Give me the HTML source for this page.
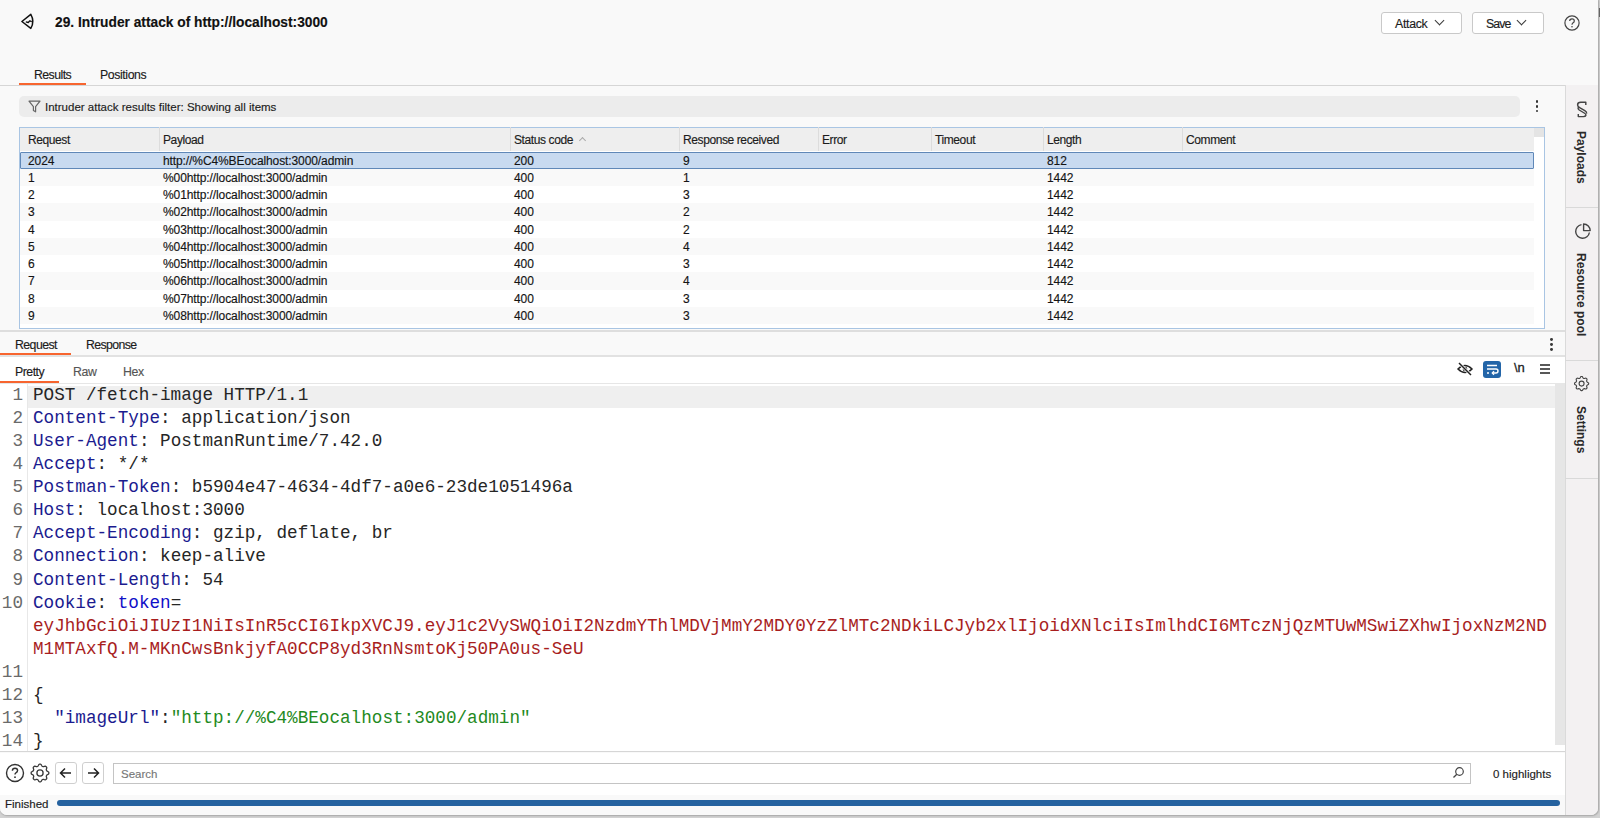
<!DOCTYPE html>
<html><head><meta charset="utf-8">
<style>
*{margin:0;padding:0;box-sizing:border-box}
html,body{width:1600px;height:818px;overflow:hidden;background:#d2d2d2;font-family:"Liberation Sans",sans-serif;color:#1c1c1c}
.a{position:absolute}
.t{position:absolute;white-space:pre;font-size:12px;line-height:14px;-webkit-text-stroke:0.15px currentColor}
#win{position:absolute;left:0;top:0;width:1598px;height:815px;background:#f9f9f9;overflow:hidden;border-radius:0 0 7px 7px;box-shadow:0.5px 0.5px 1.5px #a8a8a8}
.btn{position:absolute;background:#fff;border:1px solid #c9c9c9;border-radius:3px}
.chev{position:absolute;width:7px;height:7px;border-right:1.1px solid #3a3a3a;border-bottom:1.1px solid #3a3a3a;transform:rotate(45deg)}
.row{position:absolute;left:20px;width:1514px;height:17.3px}
.cell{position:absolute;top:1px;font-size:12px;line-height:15px;white-space:pre;color:#141414;letter-spacing:-0.1px;-webkit-text-stroke:0.15px currentColor}
.hd{position:absolute;top:5px;font-size:12px;line-height:15px;color:#1c1c1c;white-space:pre;letter-spacing:-0.4px;-webkit-text-stroke:0.15px currentColor}
.cd{position:absolute;left:33px;font-family:"Liberation Mono",monospace;font-size:17.65px;line-height:23.13px;white-space:pre;color:#262626}
.ln{position:absolute;left:0;width:23px;text-align:right;font-family:"Liberation Mono",monospace;font-size:17.65px;line-height:23.13px;color:#6a6a6a}
.k{color:#1b1b8f}
.v{color:#222}
.r{color:#a81e1e}
.g{color:#1f8a23}
.kb{color:#1010c8}
.side{position:absolute;font-size:12px;font-weight:bold;color:#2a2a2a;transform:rotate(90deg);transform-origin:0 0;white-space:pre}
</style></head><body>
<div class="a" style="left:1599px;top:8px;width:1px;height:9px;background:#555"></div>
<div id="win">
<svg width="0" height="0" style="position:absolute"><defs><g id="gear"><path d="M12.0,3.2 12.6,3.2 13.1,3.5 13.5,4.3 13.9,5.0 14.3,5.3 14.7,5.5 15.1,5.7 15.6,5.7 16.4,5.4 17.2,5.2 17.8,5.4 18.2,5.8 18.6,6.2 18.8,6.8 18.6,7.6 18.3,8.4 18.3,8.9 18.5,9.3 18.7,9.7 19.0,10.1 19.7,10.5 20.5,10.9 20.8,11.4 20.8,12.0 20.8,12.6 20.5,13.1 19.7,13.5 19.0,13.9 18.7,14.3 18.5,14.7 18.3,15.1 18.3,15.6 18.6,16.4 18.8,17.2 18.6,17.8 18.2,18.2 17.8,18.6 17.2,18.8 16.4,18.6 15.6,18.3 15.1,18.3 14.7,18.5 14.3,18.7 13.9,19.0 13.5,19.7 13.1,20.5 12.6,20.8 12.0,20.8 11.4,20.8 10.9,20.5 10.5,19.7 10.1,19.0 9.7,18.7 9.3,18.5 8.9,18.3 8.4,18.3 7.6,18.6 6.8,18.8 6.2,18.6 5.8,18.2 5.4,17.8 5.2,17.2 5.4,16.4 5.7,15.6 5.7,15.1 5.5,14.7 5.3,14.3 5.0,13.9 4.3,13.5 3.5,13.1 3.2,12.6 3.2,12.0 3.2,11.4 3.5,10.9 4.3,10.5 5.0,10.1 5.3,9.7 5.5,9.3 5.7,8.9 5.7,8.4 5.4,7.6 5.2,6.8 5.4,6.2 5.8,5.8 6.2,5.4 6.8,5.2 7.6,5.4 8.4,5.7 8.9,5.7 9.3,5.5 9.7,5.3 10.1,5.0 10.5,4.3 10.9,3.5 11.4,3.2Z" fill="none" stroke-linejoin="round"/><circle cx="12" cy="12" r="3.1" fill="none"/></g></defs></svg>

<!-- header -->
<svg class="a" style="left:14px;top:8px" width="30" height="28" viewBox="0 0 30 28"><path d="M7.9,13.5 L16.8,6.3 Q20.9,13.4 16.8,20.4 Z" fill="none" stroke="#111" stroke-width="1.5" stroke-linejoin="round"/><path d="M11.8,13.9 L14.3,14.5 L15.8,12.8 L17.8,13.6" fill="none" stroke="#111" stroke-width="1.3" stroke-linejoin="round"/></svg>
<div class="t" style="left:55px;top:16.3px;font-size:13.75px;font-weight:bold;color:#111">29. Intruder attack of http://localhost:3000</div>

<div class="btn" style="left:1381px;top:12px;width:81px;height:22px"></div>
<div class="t" style="left:1395px;top:16.7px;font-size:12.3px;letter-spacing:-0.3px">Attack</div>
<div class="chev" style="left:1436px;top:17px"></div>
<div class="btn" style="left:1472px;top:12px;width:72px;height:22px"></div>
<div class="t" style="left:1486px;top:16.7px;font-size:12.3px;letter-spacing:-0.9px">Save</div>
<div class="chev" style="left:1518px;top:17px"></div>
<svg class="a" style="left:1562.5px;top:14px" width="18" height="18" viewBox="0 0 18 18"><circle cx="9" cy="9" r="7.1" fill="none" stroke="#444" stroke-width="1.2"/><path d="M6.7,7.1 Q6.7,4.9 9,4.9 Q11.3,4.9 11.3,6.9 Q11.3,8.2 9.9,8.9 Q9,9.4 9,10.7" fill="none" stroke="#444" stroke-width="1.2"/><circle cx="9" cy="12.7" r="0.8" fill="#444"/></svg>

<!-- tabs -->
<div class="t" style="left:34px;top:67.6px;font-size:12.3px;letter-spacing:-0.55px">Results</div>
<div class="t" style="left:100px;top:67.6px;font-size:12.3px;letter-spacing:-0.4px">Positions</div>
<div class="a" style="left:0;top:85px;width:1565px;height:1px;background:#d6d6d6"></div>
<div class="a" style="left:19px;top:83px;width:67px;height:2px;background:#f7652f"></div>

<!-- filter -->
<div class="a" style="left:19px;top:96px;width:1501px;height:21px;background:#ececec;border-radius:5px"></div>
<svg class="a" style="left:28px;top:100px" width="13" height="13" viewBox="0 0 13 13"><path d="M1 1.2 H12 L7.6 6.6 V11.8 L5.4 10.4 V6.6 Z" fill="none" stroke="#666" stroke-width="1.2" stroke-linejoin="round"/></svg>
<div class="t" style="left:45px;top:100px;font-size:11.5px">Intruder attack results filter: Showing all items</div>
<div class="a" style="left:1535.6px;top:100.2px;width:2.8px;height:2.8px;background:#333;border-radius:50%"></div>
<div class="a" style="left:1535.6px;top:104.9px;width:2.8px;height:2.8px;background:#333;border-radius:50%"></div>
<div class="a" style="left:1535.6px;top:109.6px;width:2.8px;height:2.8px;background:#333;border-radius:50%"></div>
<!-- table -->
<div class="a" style="left:19px;top:126.5px;width:1526px;height:202.5px;background:#fff;border:1px solid #a9c5e3"></div>
<div class="a" style="left:20px;top:127.5px;width:1514px;height:23.5px;background:#eeeeee"></div><div class="a" style="left:1534px;top:127.5px;width:10px;height:9px;background:#e4e4e4"></div>
<div class="a" style="left:159px;top:127px;width:1px;height:24px;background:#dcdcdc"></div>
<div class="a" style="left:510px;top:127px;width:1px;height:24px;background:#dcdcdc"></div>
<div class="a" style="left:679px;top:127px;width:1px;height:24px;background:#dcdcdc"></div>
<div class="a" style="left:818px;top:127px;width:1px;height:24px;background:#dcdcdc"></div>
<div class="a" style="left:931px;top:127px;width:1px;height:24px;background:#dcdcdc"></div>
<div class="a" style="left:1043px;top:127px;width:1px;height:24px;background:#dcdcdc"></div>
<div class="a" style="left:1182px;top:127px;width:1px;height:24px;background:#dcdcdc"></div>
<div class="hd" style="left:28px;top:133px">Request</div>
<div class="hd" style="left:163px;top:133px">Payload</div>
<div class="hd" style="left:514px;top:133px">Status code</div>
<div class="hd" style="left:683px;top:133px">Response received</div>
<div class="hd" style="left:822px;top:133px">Error</div>
<div class="hd" style="left:935px;top:133px">Timeout</div>
<div class="hd" style="left:1047px;top:133px">Length</div>
<div class="hd" style="left:1186px;top:133px">Comment</div>
<div class="a" style="left:580px;top:138px;width:5px;height:5px;border-left:1px solid #aaa;border-top:1px solid #aaa;transform:rotate(45deg)"></div>
<div class="a" style="left:20px;top:151.5px;width:1514px;height:17px;background:#c8daf0;border:1.2px solid #6088b8;border-radius:1px"></div>
<div class="cell" style="left:28px;top:153.70px">2024</div>
<div class="cell" style="left:163px;top:153.70px">http://%C4%BEocalhost:3000/admin</div>
<div class="cell" style="left:514px;top:153.70px">200</div>
<div class="cell" style="left:683px;top:153.70px">9</div>
<div class="cell" style="left:1047px;top:153.70px">812</div>
<div class="a" style="left:20px;top:168.75px;width:1514px;height:17.25px;background:#f9f9f9"></div>
<div class="cell" style="left:28px;top:170.95px">1</div>
<div class="cell" style="left:163px;top:170.95px">%00http://localhost:3000/admin</div>
<div class="cell" style="left:514px;top:170.95px">400</div>
<div class="cell" style="left:683px;top:170.95px">1</div>
<div class="cell" style="left:1047px;top:170.95px">1442</div>
<div class="cell" style="left:28px;top:188.20px">2</div>
<div class="cell" style="left:163px;top:188.20px">%01http://localhost:3000/admin</div>
<div class="cell" style="left:514px;top:188.20px">400</div>
<div class="cell" style="left:683px;top:188.20px">3</div>
<div class="cell" style="left:1047px;top:188.20px">1442</div>
<div class="a" style="left:20px;top:203.25px;width:1514px;height:17.25px;background:#f9f9f9"></div>
<div class="cell" style="left:28px;top:205.45px">3</div>
<div class="cell" style="left:163px;top:205.45px">%02http://localhost:3000/admin</div>
<div class="cell" style="left:514px;top:205.45px">400</div>
<div class="cell" style="left:683px;top:205.45px">2</div>
<div class="cell" style="left:1047px;top:205.45px">1442</div>
<div class="cell" style="left:28px;top:222.70px">4</div>
<div class="cell" style="left:163px;top:222.70px">%03http://localhost:3000/admin</div>
<div class="cell" style="left:514px;top:222.70px">400</div>
<div class="cell" style="left:683px;top:222.70px">2</div>
<div class="cell" style="left:1047px;top:222.70px">1442</div>
<div class="a" style="left:20px;top:237.75px;width:1514px;height:17.25px;background:#f9f9f9"></div>
<div class="cell" style="left:28px;top:239.95px">5</div>
<div class="cell" style="left:163px;top:239.95px">%04http://localhost:3000/admin</div>
<div class="cell" style="left:514px;top:239.95px">400</div>
<div class="cell" style="left:683px;top:239.95px">4</div>
<div class="cell" style="left:1047px;top:239.95px">1442</div>
<div class="cell" style="left:28px;top:257.20px">6</div>
<div class="cell" style="left:163px;top:257.20px">%05http://localhost:3000/admin</div>
<div class="cell" style="left:514px;top:257.20px">400</div>
<div class="cell" style="left:683px;top:257.20px">3</div>
<div class="cell" style="left:1047px;top:257.20px">1442</div>
<div class="a" style="left:20px;top:272.25px;width:1514px;height:17.25px;background:#f9f9f9"></div>
<div class="cell" style="left:28px;top:274.45px">7</div>
<div class="cell" style="left:163px;top:274.45px">%06http://localhost:3000/admin</div>
<div class="cell" style="left:514px;top:274.45px">400</div>
<div class="cell" style="left:683px;top:274.45px">4</div>
<div class="cell" style="left:1047px;top:274.45px">1442</div>
<div class="cell" style="left:28px;top:291.70px">8</div>
<div class="cell" style="left:163px;top:291.70px">%07http://localhost:3000/admin</div>
<div class="cell" style="left:514px;top:291.70px">400</div>
<div class="cell" style="left:683px;top:291.70px">3</div>
<div class="cell" style="left:1047px;top:291.70px">1442</div>
<div class="a" style="left:20px;top:306.75px;width:1514px;height:17.25px;background:#f9f9f9"></div>
<div class="cell" style="left:28px;top:308.95px">9</div>
<div class="cell" style="left:163px;top:308.95px">%08http://localhost:3000/admin</div>
<div class="cell" style="left:514px;top:308.95px">400</div>
<div class="cell" style="left:683px;top:308.95px">3</div>
<div class="cell" style="left:1047px;top:308.95px">1442</div>
<!-- splitter -->
<div class="a" style="left:0;top:330px;width:1565px;height:2px;background:#dedede"></div>
<div class="t" style="left:15px;top:338px;font-size:12.3px;letter-spacing:-0.55px">Request</div>
<div class="t" style="left:86px;top:338px;font-size:12.3px;letter-spacing:-0.6px">Response</div>
<div class="a" style="left:0;top:355px;width:1565px;height:2px;background:#e2e2e2"></div>
<div class="a" style="left:0;top:353px;width:71px;height:2px;background:#f7652f"></div>
<div class="a" style="left:1550px;top:338.3px;width:2.9px;height:2.9px;background:#3a3a3a;border-radius:50%"></div>
<div class="a" style="left:1550px;top:343.1px;width:2.9px;height:2.9px;background:#3a3a3a;border-radius:50%"></div>
<div class="a" style="left:1550px;top:347.9px;width:2.9px;height:2.9px;background:#3a3a3a;border-radius:50%"></div>
<div class="a" style="left:0;top:357px;width:1565px;height:26px;background:#fff"></div>
<div class="t" style="left:15px;top:365px;font-size:12.3px;letter-spacing:-0.5px">Pretty</div>
<div class="t" style="left:73px;top:365px;font-size:12.3px;letter-spacing:-0.4px;color:#555">Raw</div>
<div class="t" style="left:123px;top:365px;font-size:12.3px;letter-spacing:-0.4px;color:#555">Hex</div>
<div class="a" style="left:0;top:380.5px;width:59px;height:2px;background:#f7652f"></div>
<div class="a" style="left:0;top:382.5px;width:1565px;height:1.5px;background:#e6e6e6"></div>
<div class="a" style="left:0;top:384px;width:1565px;height:367px;background:#fff"></div>
<div class="a" style="left:28px;top:385.5px;width:1527px;height:22.5px;background:#efefef"></div>
<div class="a" style="left:27px;top:384px;width:1px;height:367px;background:#e8e8e8"></div>
<div class="a" style="left:1555px;top:384px;width:10px;height:361px;background:#e6e6e6"></div>
<div class="ln" style="top:383.50px">1</div>
<div class="cd" style="top:383.50px">POST /fetch-image HTTP/1.1</div>
<div class="ln" style="top:406.63px">2</div>
<div class="cd" style="top:406.63px"><span class="k">Content-Type</span>: application/json</div>
<div class="ln" style="top:429.76px">3</div>
<div class="cd" style="top:429.76px"><span class="k">User-Agent</span>: PostmanRuntime/7.42.0</div>
<div class="ln" style="top:452.89px">4</div>
<div class="cd" style="top:452.89px"><span class="k">Accept</span>: */*</div>
<div class="ln" style="top:476.02px">5</div>
<div class="cd" style="top:476.02px"><span class="k">Postman-Token</span>: b5904e47-4634-4df7-a0e6-23de1051496a</div>
<div class="ln" style="top:499.15px">6</div>
<div class="cd" style="top:499.15px"><span class="k">Host</span>: localhost:3000</div>
<div class="ln" style="top:522.28px">7</div>
<div class="cd" style="top:522.28px"><span class="k">Accept-Encoding</span>: gzip, deflate, br</div>
<div class="ln" style="top:545.41px">8</div>
<div class="cd" style="top:545.41px"><span class="k">Connection</span>: keep-alive</div>
<div class="ln" style="top:568.54px">9</div>
<div class="cd" style="top:568.54px"><span class="k">Content-Length</span>: 54</div>
<div class="ln" style="top:591.67px">10</div>
<div class="cd" style="top:591.67px"><span class="k">Cookie</span>: <span class="kb">token</span>=</div>
<div class="cd" style="top:614.80px"><span class="r">eyJhbGciOiJIUzI1NiIsInR5cCI6IkpXVCJ9.eyJ1c2VySWQiOiI2NzdmYThlMDVjMmY2MDY0YzZlMTc2NDkiLCJyb2xlIjoidXNlciIsImlhdCI6MTczNjQzMTUwMSwiZXhwIjoxNzM2ND</span></div>
<div class="cd" style="top:637.93px"><span class="r">M1MTAxfQ.M-MKnCwsBnkjyfA0CCP8yd3RnNsmtoKj50PA0us-SeU</span></div>
<div class="ln" style="top:661.06px">11</div>
<div class="ln" style="top:684.19px">12</div>
<div class="cd" style="top:684.19px">{</div>
<div class="ln" style="top:707.32px">13</div>
<div class="cd" style="top:707.32px">  <span class="k">"imageUrl"</span>:<span class="g">"http://%C4%BEocalhost:3000/admin"</span></div>
<div class="ln" style="top:730.45px">14</div>
<div class="cd" style="top:730.45px">}</div>
<div class="a" style="left:0;top:751px;width:1565px;height:1.3px;background:#d6d6d6"></div>
<div class="a" style="left:0;top:752.5px;width:1565px;height:43px;background:#fff"></div>
<svg class="a" style="left:1456px;top:361px" width="18" height="16" viewBox="0 0 18 16"><path d="M2 8 Q9 1 16 8 Q9 15 2 8 Z" fill="none" stroke="#222" stroke-width="1.5"/><circle cx="9" cy="8" r="2.3" fill="#222"/><path d="M3 2 L15 14" stroke="#fff" stroke-width="3"/><path d="M3 2 L15 14" stroke="#222" stroke-width="1.5"/></svg>
<div class="a" style="left:1483px;top:361px;width:18px;height:17px;background:#2365a8;border-radius:3px"></div>
<svg class="a" style="left:1483px;top:361px" width="18" height="17" viewBox="0 0 18 17"><path d="M4 4.5 H14 M4 8 H13 Q15 8 15 10 Q15 12 13 12 H10" fill="none" stroke="#fff" stroke-width="1.4"/><path d="M11 10.3 L9.3 12 L11 13.7" fill="none" stroke="#fff" stroke-width="1.3"/><path d="M4 12 H6" stroke="#fff" stroke-width="1.4"/></svg>
<div class="t" style="left:1514px;top:361px;font-size:13px;color:#222;-webkit-text-stroke:0.3px #222">\n</div>
<svg class="a" style="left:1539px;top:363px" width="12" height="12" viewBox="0 0 12 12"><path d="M1 2 H11 M1 6 H11 M1 10 H11" stroke="#222" stroke-width="1.4"/></svg>
<svg class="a" style="left:5px;top:763px" width="20" height="20" viewBox="0 0 20 20"><circle cx="10" cy="10" r="8.5" fill="none" stroke="#333" stroke-width="1.4"/><path d="M7.4 7.8 Q7.4 5.3 10 5.3 Q12.6 5.3 12.6 7.6 Q12.6 9 10.9 9.8 Q10 10.3 10 11.6" fill="none" stroke="#333" stroke-width="1.4"/><circle cx="10" cy="14.2" r="0.9" fill="#333"/></svg>
<svg class="a" style="left:28px;top:760.7px" width="24" height="24" viewBox="0 0 24 24"><use href="#gear" stroke="#3a3a3a" stroke-width="1.3"/></svg>
<div class="btn" style="left:55px;top:762px;width:22px;height:22px;border-color:#cfcfcf"></div>
<svg class="a" style="left:55px;top:762px" width="22" height="22" viewBox="0 0 22 22"><path d="M16 11 H6 M10 6.5 L5.5 11 L10 15.5" fill="none" stroke="#222" stroke-width="1.5"/></svg>
<div class="btn" style="left:82px;top:762px;width:22px;height:22px;border-color:#cfcfcf"></div>
<svg class="a" style="left:82px;top:762px" width="22" height="22" viewBox="0 0 22 22"><path d="M6 11 H16 M12 6.5 L16.5 11 L12 15.5" fill="none" stroke="#222" stroke-width="1.5"/></svg>
<div class="a" style="left:113px;top:763px;width:1358px;height:21px;background:#fff;border:1px solid #c4c4c4"></div>
<div class="t" style="left:121px;top:767px;font-size:11.5px;color:#777">Search</div>
<svg class="a" style="left:1452px;top:766px" width="13" height="13" viewBox="0 0 13 13"><circle cx="7.5" cy="5.5" r="3.8" fill="none" stroke="#444" stroke-width="1.2"/><path d="M4.8 8.2 L1.5 11.5" stroke="#444" stroke-width="1.3"/></svg>
<div class="t" style="left:1493px;top:767px;font-size:11.5px;color:#1c1c1c">0 highlights</div>
<div class="a" style="left:0;top:795px;width:1565px;height:21px;background:#f9f9f9"></div>
<div class="t" style="left:5px;top:797px;font-size:11.5px;color:#1c1c1c">Finished</div>
<div class="a" style="left:57px;top:800px;width:1503px;height:6px;background:#25629f;border-radius:3px"></div>
<!-- side panel -->
<div class="a" style="left:1565px;top:85px;width:34px;height:731px;background:#f3f1f2;border-left:1px solid #dadada"></div>
<div class="a" style="left:1565px;top:207px;width:34px;height:1px;background:#d9d9d9"></div>
<div class="a" style="left:1565px;top:360px;width:34px;height:1px;background:#d9d9d9"></div>
<div class="a" style="left:1565px;top:478px;width:34px;height:1px;background:#d9d9d9"></div>
<svg class="a" style="left:1574px;top:99px" width="16" height="20" viewBox="0 0 16 20"><path d="M11.8,6 V3.3 H6.8 Q3.6,3.3 3.6,5.9 Q3.6,7.4 5.6,8.6 L10.8,11.6 Q13,13 12.6,14.6" fill="none" stroke="#444" stroke-width="1.45" stroke-linejoin="round"/><path d="M4.8,7.6 Q3.2,9.6 5.2,11 L10.2,14 Q12.3,15.2 11.9,16.4 Q11.4,17.6 9.4,17.6 H4.3 V15" fill="none" stroke="#444" stroke-width="1.45" stroke-linejoin="round"/></svg>
<div class="side" style="left:1588px;top:131px">Payloads</div>
<svg class="a" style="left:1574px;top:223px" width="18" height="18" viewBox="0 0 18 18"><path d="M7.5,1.6 A6.9,6.9 0 1 0 15.4,9.5" fill="none" stroke="#444" stroke-width="1.4"/><path d="M9.6,1 V7.6 H16.2 A6.6,6.6 0 0 0 9.6,1 Z" fill="none" stroke="#444" stroke-width="1.4" stroke-linejoin="round"/></svg>
<div class="side" style="left:1588px;top:253px">Resource pool</div>
<svg class="a" style="left:1572.4px;top:374px" width="19.2" height="19.2" viewBox="0 0 24 24"><use href="#gear" stroke="#444" stroke-width="1.4"/></svg>
<div class="side" style="left:1588px;top:406px">Settings</div>
</div>
</body></html>
